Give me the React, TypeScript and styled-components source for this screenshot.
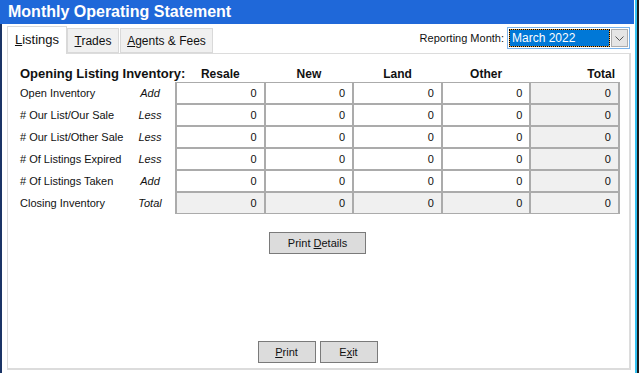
import React from "react";
import styled, { createGlobalStyle } from "styled-components";

const Global = createGlobalStyle`
  html, body { margin: 0; padding: 0; }
  body {
    width: 639px; height: 373px; overflow: hidden; background: #fff;
    font-family: "Liberation Sans", Arial, sans-serif; color: #111;
  }
  * { box-sizing: border-box; }
`;

const Screen = styled.div`
  display: flex;
  width: 639px;
  height: 373px;
`;

const Window = styled.div`
  width: 634px;
  height: 373px;
  display: flex;
  flex-direction: column;
  background: #fff;
`;

const RightStrip = styled.div`
  width: 5px;
  height: 373px;
  border-left: 1px solid #fff;
  background: linear-gradient(to right, #35c2f2 0 2px, #1c1c1c 2px 4px);
`;

const TitleBar = styled.div`
  height: 24px;
  background: #1f68d9;
  color: #fff;
  font-weight: bold;
  font-size: 16px;
  line-height: 24px;
  padding-left: 8px;
  white-space: nowrap;
`;

const Body = styled.div`
  flex: 1;
  display: flex;
  flex-direction: column;
  border-left: 2px solid #1b3466;
  padding: 0 3px 3px 5px;
`;

const TabRow = styled.div`
  height: 29px;
  display: flex;
  align-items: flex-end;
`;

const Tab = styled.div<{ $active?: boolean; $w: number; $gap?: number }>`
  position: relative;
  z-index: ${(p) => (p.$active ? 2 : 1)};
  width: ${(p) => p.$w}px;
  height: ${(p) => (p.$active ? 28 : 25)}px;
  margin-bottom: ${(p) => (p.$active ? -1 : 0)}px;
  margin-left: ${(p) => p.$gap ?? 0}px;
  background: ${(p) => (p.$active ? "#fff" : "#f0f0f0")};
  border: 1px solid #d9d9d9;
  border-bottom: ${(p) => (p.$active ? "none" : "1px solid #d9d9d9")};
  font-size: ${(p) => (p.$active ? 13 : 12)}px;
  display: flex;
  align-items: center;
  justify-content: center;
  padding-bottom: ${(p) => (p.$active ? 2 : 0)}px;
  color: #111;
`;

const ReportGroup = styled.div`
  align-self: flex-start;
  margin: 3px 1px 0 auto;
  display: flex;
  align-items: center;
  gap: 3px;
`;

const ReportLabel = styled.span`
  font-size: 11px;
`;

const Select = styled.div`
  width: 123px;
  height: 22px;
  border: 1px solid #7ab4ec;
  display: flex;
  align-items: stretch;
  padding: 1px;
  gap: 1px;
  background: #fff;
`;

const SelectValue = styled.div`
  flex: 1;
  border: 1px dotted #000;
  background: linear-gradient(#0078d7, #0078d7) padding-box, #eba03a border-box;
  color: #fff;
  font-size: 12px;
  line-height: 16px;
  padding-left: 2px;
`;

const DropButton = styled.div`
  width: 17px;
  background: #e5e5e5;
  border: 1px solid #adadad;
  display: flex;
  align-items: center;
  justify-content: center;
`;

const Panel = styled.div`
  flex: 1;
  display: flex;
  flex-direction: column;
  border-style: solid;
  border-color: #dcdcdc;
  border-width: 1px 2px 2px 1px;
  padding: 10px 0 5px 12px;
`;

const HeadRow = styled.div`
  display: flex;
  align-items: flex-end;
  height: 17px;
  margin-bottom: 1px;
`;

const SectionTitle = styled.div`
  width: 155px;
  font-size: 13px;
  font-weight: bold;
  white-space: nowrap;
`;

const ColHeads = styled.div`
  width: 445px;
  display: grid;
  grid-template-columns: repeat(5, 1fr);
  column-gap: 2px;
  padding: 0 2px;
`;

const ColHead = styled.div<{ $right?: boolean }>`
  font-size: 12px;
  font-weight: bold;
  text-align: ${(p) => (p.$right ? "right" : "center")};
  padding-right: ${(p) => (p.$right ? 3 : 0)}px;
`;

const DataRow = styled.div`
  display: flex;
`;

const LabelCol = styled.div`
  width: 155px;
  display: grid;
  grid-template-columns: 110px 40px;
  grid-auto-rows: 20px;
  row-gap: 2px;
  padding-top: 1px;
  font-size: 11px;
  align-items: center;
`;

const RowName = styled.div`
  white-space: nowrap;
`;

const RowOp = styled.div`
  font-style: italic;
  text-align: center;
`;

const CellGrid = styled.div`
  width: 445px;
  display: grid;
  grid-template-columns: repeat(5, 1fr);
  grid-auto-rows: 20px;
  gap: 2px;
  padding: 1px 2px;
  background: #ababab;
`;

const Cell = styled.div<{ $readonly?: boolean }>`
  background: ${(p) => (p.$readonly ? "#f0f0f0" : "#fff")};
  font-size: 11px;
  line-height: 20px;
  text-align: right;
  padding-right: 7px;
`;

const Button = styled.button<{ $w: number }>`
  width: ${(p) => p.$w}px;
  height: 22px;
  background: #dcdcdc;
  border: 1px solid #7a7a7a;
  border-radius: 0;
  font-family: "Liberation Sans", Arial, sans-serif;
  font-size: 11px;
  color: #111;
  padding: 0;
`;

const CenterRow = styled.div<{ $top?: number }>`
  display: flex;
  justify-content: center;
  gap: 4px;
  margin-top: ${(p) => p.$top ?? 0}px;
  padding-right: 14px;
`;

const Spacer = styled.div`
  flex: 1;
`;

const cols = ["Resale", "New", "Land", "Other", "Total"];
const rows = [
  { name: "Open Inventory", op: "Add" },
  { name: "# Our List/Our Sale", op: "Less" },
  { name: "# Our List/Other Sale", op: "Less" },
  { name: "# Of Listings Expired", op: "Less" },
  { name: "# Of Listings Taken", op: "Add" },
  { name: "Closing Inventory", op: "Total", closing: true },
];

export default function App() {
  return (
    <>
      <Global />
      <Screen>
        <Window>
          <TitleBar>Monthly Operating Statement</TitleBar>
          <Body>
            <TabRow>
              <Tab $active $w={60}>
                <span><u>L</u>istings</span>
              </Tab>
              <Tab $w={52}>
                <span><u>T</u>rades</span>
              </Tab>
              <Tab $w={93} $gap={1}>
                <span><u>A</u>gents &amp; Fees</span>
              </Tab>
              <ReportGroup>
                <ReportLabel>Reporting Month:</ReportLabel>
                <Select>
                  <SelectValue>March 2022</SelectValue>
                  <DropButton>
                    <svg width="9" height="5" viewBox="0 0 9 5">
                      <polyline points="0.5,0.5 4.5,4.5 8.5,0.5" fill="none" stroke="#555" strokeWidth="1" />
                    </svg>
                  </DropButton>
                </Select>
              </ReportGroup>
            </TabRow>
            <Panel>
              <HeadRow>
                <SectionTitle>Opening Listing Inventory:</SectionTitle>
                <ColHeads>
                  {cols.map((c, i) => (
                    <ColHead key={c} $right={i === 4}>{c}</ColHead>
                  ))}
                </ColHeads>
              </HeadRow>
              <DataRow>
                <LabelCol>
                  {rows.map((r) => (
                    <React.Fragment key={r.name}>
                      <RowName>{r.name}</RowName>
                      <RowOp>{r.op}</RowOp>
                    </React.Fragment>
                  ))}
                </LabelCol>
                <CellGrid>
                  {rows.map((r) =>
                    cols.map((c, ci) => (
                      <Cell key={r.name + c} $readonly={ci === 4 || !!r.closing}>0</Cell>
                    ))
                  )}
                </CellGrid>
              </DataRow>
              <CenterRow $top={18}>
                <Button $w={97}>Print <u>D</u>etails</Button>
              </CenterRow>
              <Spacer />
              <CenterRow>
                <Button $w={58}><u>P</u>rint</Button>
                <Button $w={58}>E<u>x</u>it</Button>
              </CenterRow>
            </Panel>
          </Body>
        </Window>
        <RightStrip />
      </Screen>
    </>
  );
}
